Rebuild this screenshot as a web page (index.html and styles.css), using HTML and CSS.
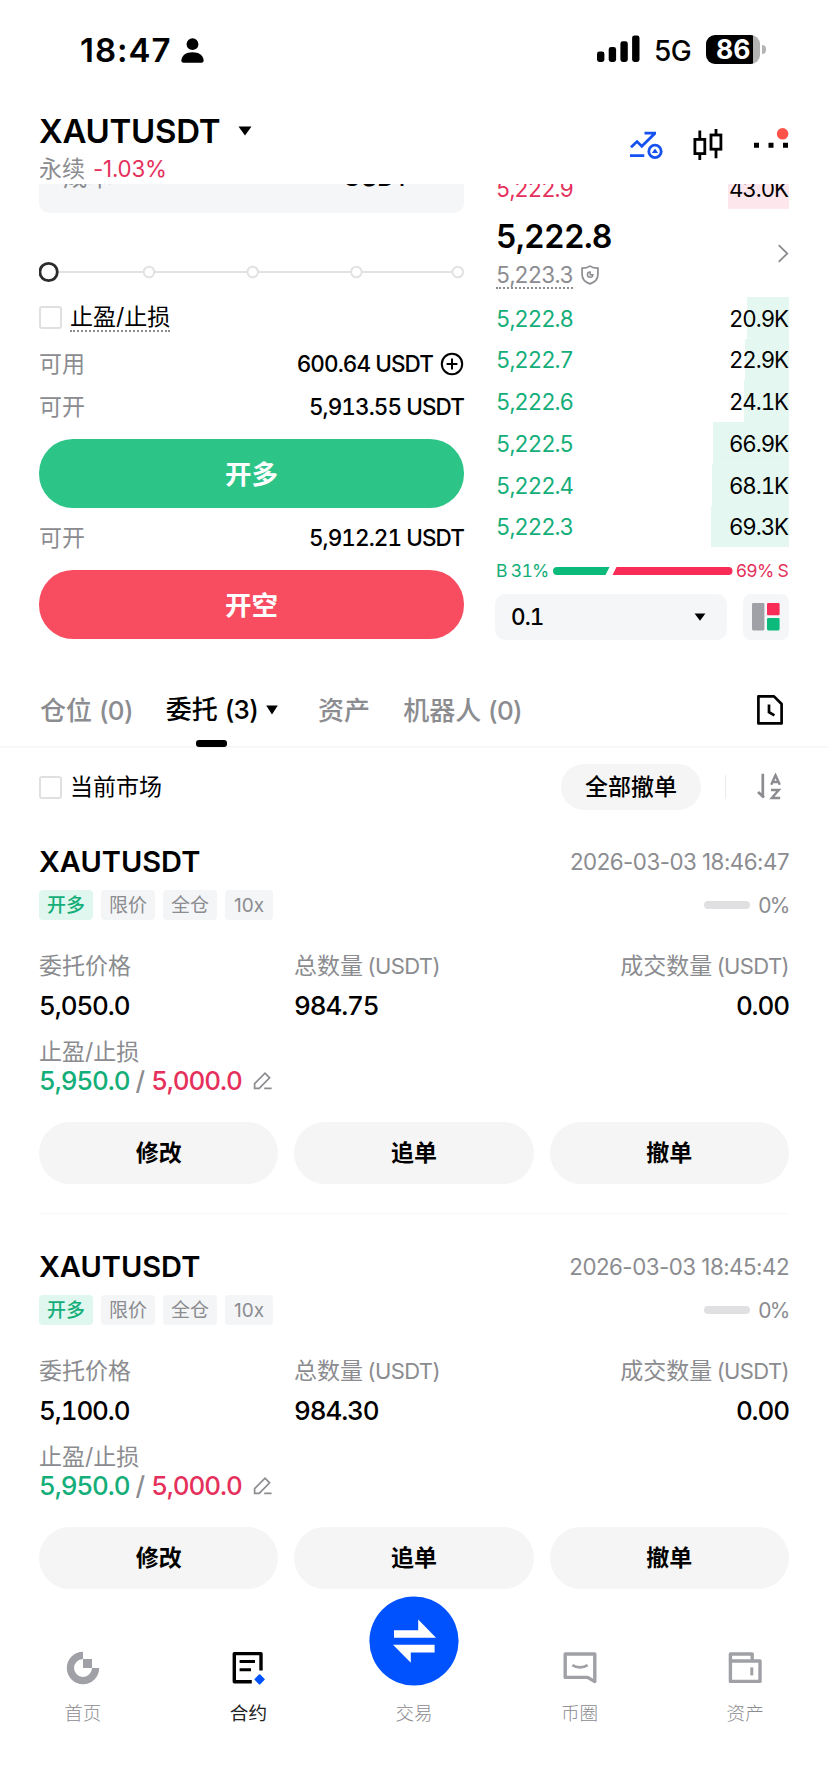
FILE: index.html
```html
<!DOCTYPE html>
<html lang="zh-CN">
<head>
<meta charset="utf-8">
<title>XAUTUSDT 永续</title>
<link rel="stylesheet" href="styles.css">
</head>
<body>
<div class="status">
  <div class="clock"><span>18:47</span>
    <svg width="23" height="25" viewBox="0 0 23 25"><circle cx="11.5" cy="6.2" r="5.9"/><path d="M0.4 22.6C0.4 17.6 5 14.2 11.5 14.2S22.6 17.6 22.6 22.6C22.6 24 21.8 24.8 20.4 24.8H2.6C1.2 24.8 .4 24 .4 22.6Z"/></svg>
  </div>
  <div class="signals">
    <svg width="43" height="28" viewBox="0 0 43 28"><rect x="0" y="16.5" width="7.4" height="10.5" rx="2.4"/><rect x="11.7" y="12" width="7.4" height="15" rx="2.4"/><rect x="23.4" y="6.3" width="7.4" height="20.7" rx="2.4"/><rect x="35.1" y="0.5" width="7.4" height="26.5" rx="2.4"/></svg>
    <span class="net">5G</span>
    <div class="battery"><span>86</span></div><i class="nub"></i>
  </div>
</div>

<header class="header">
  <div>
    <h1 class="pair">XAUTUSDT <svg width="14" height="10" viewBox="0 0 14 10"><path d="M.5.5h13L7 9.6z"/></svg></h1>
    <div class="sub">永续 <span class="down">-1.03%</span></div>
  </div>
  <div class="tools">
    <svg width="34" height="28" viewBox="0 0 34 28" fill="none" stroke="#1652f0" stroke-width="2.8"><path d="M2 16.2 8 10.6 12.8 15.2 26 2.2M15.5 2.2H27M1 24.6H15.3"/><circle cx="26" cy="20.4" r="6.2"/><path d="M26 17.4l3.1 4.5h-6.2z" fill="#1652f0" stroke="none"/></svg>
    <svg width="30" height="34" viewBox="0 0 30 34" fill="none" stroke="#000" stroke-width="2.8"><rect x="1.9" y="11.4" width="9.9" height="14.2"/><path d="M6.8 2.5v9M6.8 25.6v6.5"/><rect x="18" y="7" width="9.9" height="14.2"/><path d="M23 1v6M23 21.2v9"/></svg>
    <svg class="more" width="36" height="34" viewBox="0 0 36 34"><path d="M1 14.8h5v5H1zM15.5 14.8h5v5h-5zM30 14.8h5v5h-5z"/><circle cx="29.6" cy="5.8" r="5.8" fill="#ff5349"/></svg>
  </div>
</header>

<section class="trade">
  <div class="form">
    <div class="amount"><span>成本</span><b>USDT</b></div>
    <svg class="slider" width="425" height="22" viewBox="0 0 425 22" fill="#fff" stroke="#e2e2e2" stroke-width="2"><path d="M10 11H419"/><circle cx="110" cy="11" r="5.3"/><circle cx="213.7" cy="11" r="5.3"/><circle cx="317.4" cy="11" r="5.3"/><circle cx="418.8" cy="11" r="5.3"/><circle cx="9.6" cy="11" r="8.7" stroke="#2b2b2d" stroke-width="2.8"/></svg>
    <label class="check tpsl"><i class="box"></i><span class="dotted">止盈/止损</span></label>
    <div class="line avail"><span>可用</span><b>600.64 USDT<svg width="24" height="24" viewBox="0 0 24 24" fill="none" stroke="#000" stroke-width="2"><circle cx="12" cy="12" r="10.2"/><path d="M6.6 12h10.8M12 6.6v10.8"/></svg></b></div>
    <div class="line open"><span>可开</span><b>5,913.55 USDT</b></div>
    <button class="big long">开多</button>
    <div class="line short-line"><span>可开</span><b>5,912.21 USDT</b></div>
    <button class="big short">开空</button>
  </div>

  <div class="book">
    <div class="row ask" style="--depth:61px"><span>5,222.9</span><b>43.0K</b></div>
    <div class="mid">
      <div>
        <div class="last">5,222.8</div>
        <div class="mark"><span>5,223.3</span><svg width="18" height="20" viewBox="0 0 18 20" fill="none" stroke="#8b8c90" stroke-width="1.7"><path d="M9 1.1C11.3 2.6 14 3.2 16.9 3.2V9.5C16.9 14 13.8 17.2 9 18.9C4.2 17.2 1.1 14 1.1 9.5V3.2C4 3.2 6.7 2.6 9 1.1Z"/><path d="M9.2 6.9A2.7 2.7 0 1 0 11.8 9.7H9.2Z" stroke-width="1.5"/></svg></div>
      </div>
      <svg width="12" height="19" viewBox="0 0 12 19" fill="none" stroke="#8b8c90" stroke-width="1.8"><path d="M1.7 1.2 10.3 9.5 1.7 17.8"/></svg>
    </div>
    <div class="row" style="--depth:42px"><span>5,222.8</span><b>20.9K</b></div>
    <div class="row" style="--depth:44px"><span>5,222.7</span><b>22.9K</b></div>
    <div class="row" style="--depth:45px"><span>5,222.6</span><b>24.1K</b></div>
    <div class="row" style="--depth:76px"><span>5,222.5</span><b>66.9K</b></div>
    <div class="row" style="--depth:77px"><span>5,222.4</span><b>68.1K</b></div>
    <div class="row" style="--depth:78px"><span>5,222.3</span><b>69.3K</b></div>
    <div class="ratio"><span class="up">B 31%</span>
      <svg width="180" height="8" viewBox="0 0 180 8"><path d="M4 0H56.5L52.5 8H4A4 4 0 0 1 4 0Z" fill="#0cba7b"/><path d="M63.5 0H175.5A4 4 0 0 1 175.5 8H59.5Z" fill="#f92c57"/></svg>
      <span class="down">69% S</span></div>
    <div class="controls">
      <div class="select"><span>0.1</span><svg width="12" height="8" viewBox="0 0 12 8"><path d="M.6.4h10.8L6 7.8z"/></svg></div>
      <div class="layout"><svg width="28" height="28" viewBox="0 0 28 28"><rect width="12.4" height="27.4" rx="1.3" fill="#9fa1a6"/><rect x="15" width="12.6" height="12.3" rx="1.3" fill="#f92c57"/><rect x="15" y="15" width="12.6" height="12.4" rx="1.3" fill="#0cba7b"/></svg></div>
    </div>
  </div>
</section>

<nav class="tabs">
  <span class="tab">仓位 <u>(0)</u></span>
  <span class="tab active"><span>委托 <u>(3)</u></span><svg width="12" height="10" viewBox="0 0 12 10"><path d="M.2.6h11.6L6 9.4z"/></svg></span>
  <span class="tab">资产</span>
  <span class="tab">机器人 <u>(0)</u></span>
  <svg class="history" width="28" height="32" viewBox="0 0 28 32" fill="none" stroke="#000" stroke-width="2.7" stroke-linejoin="round"><path d="M2.4 2.4H18L25.6 10V29.4H2.4Z"/><path d="M13 10.5v7.7l5.4 3.2" stroke-linejoin="miter"/></svg>
</nav>

<div class="filter">
  <label class="check"><i class="box"></i><span>当前市场</span></label>
  <button class="pill cancel-all">全部撤单</button>
  <i class="sep"></i>
  <svg width="26" height="28" viewBox="0 0 26 28" fill="none" stroke="#8b8c90" stroke-width="2.7"><path d="M5.8 .8V24.6M7 24.4 1 18.9"/><path d="M14.2 11.8 18.5 2.2 22.8 11.8M15.6 9H21.4" stroke-width="2.4"/><path d="M14 17H21.8L14.8 25H23.2" stroke-width="2.4"/></svg>
</div>

<main class="orders">
  <article class="card">
    <div class="head"><h2>XAUTUSDT</h2><time>2026-03-03 18:46:47</time></div>
    <div class="tags"><em class="tag buy">开多</em><em class="tag">限价</em><em class="tag">全仓</em><em class="tag lev">10x</em><i class="bar"></i><span class="pct">0%</span></div>
    <div class="stats"><span>委托价格</span><span>总数量 <u>(USDT)</u></span><span>成交数量 <u>(USDT)</u></span><b>5,050.0</b><b>984.75</b><b>0.00</b></div>
    <div class="stop"><span>止盈/止损</span>
      <p><b class="up">5,950.0</b><i>/</i><b class="down">5,000.0</b><svg width="20" height="20" viewBox="0 0 20 20" fill="none" stroke="#8b8c90" stroke-width="1.7"><path d="M1.6 17.4V12.6L12 2.2 16.6 6.8 6.2 17.4ZM11.2 17.4H18.6"/></svg></p></div>
    <div class="actions"><button class="pill">修改</button><button class="pill">追单</button><button class="pill">撤单</button></div>
  </article>
  <article class="card">
    <div class="head"><h2>XAUTUSDT</h2><time>2026-03-03 18:45:42</time></div>
    <div class="tags"><em class="tag buy">开多</em><em class="tag">限价</em><em class="tag">全仓</em><em class="tag lev">10x</em><i class="bar"></i><span class="pct">0%</span></div>
    <div class="stats"><span>委托价格</span><span>总数量 <u>(USDT)</u></span><span>成交数量 <u>(USDT)</u></span><b>5,100.0</b><b>984.30</b><b>0.00</b></div>
    <div class="stop"><span>止盈/止损</span>
      <p><b class="up">5,950.0</b><i>/</i><b class="down">5,000.0</b><svg width="20" height="20" viewBox="0 0 20 20" fill="none" stroke="#8b8c90" stroke-width="1.7"><path d="M1.6 17.4V12.6L12 2.2 16.6 6.8 6.2 17.4ZM11.2 17.4H18.6"/></svg></p></div>
    <div class="actions"><button class="pill">修改</button><button class="pill">追单</button><button class="pill">撤单</button></div>
  </article>
</main>

<footer class="nav">
  <div class="item"><svg width="34" height="34" viewBox="0 0 34 34" fill="#9fa1a6"><path d="M17 .8V8A9 9 0 1 0 26 17H33.2A16.2 16.2 0 1 1 17 .8Z"/><path d="M17 8h9v9h-9z"/></svg><span>首页</span></div>
  <div class="item current"><svg width="34" height="34" viewBox="0 0 34 34" fill="none" stroke="#000" stroke-width="3"><path d="M30 19.5V2.6H3.3V30.8H20.8" stroke-linejoin="round" stroke-width="3.4"/><path d="M8.6 10.4H24M8.6 18.8H20"/><rect x="-3.9" y="-3.9" width="7.8" height="7.8" rx="1" transform="translate(28.6 28.4) rotate(45)" fill="#0052ff" stroke="none"/></svg><span>合约</span></div>
  <div class="item"><svg class="swap" width="90" height="90" viewBox="0 0 90 90"><circle cx="45" cy="45" r="44.6" fill="#0052ff"/><path d="M25 34.3H49.2V23.6L67 41.8H25ZM65.6 48.8V56.6H41.8V66.8L24 48.8Z" fill="#fff"/></svg><span>交易</span></div>
  <div class="item"><svg width="34" height="34" viewBox="0 0 34 34" fill="none" stroke="#9fa1a6" stroke-width="3.4" stroke-linejoin="round"><path d="M2.2 3H31.8V30.6L24.6 26.4H2.2Z"/><path d="M9.4 14.2C13.6 17 20.4 17 24.6 14.2" stroke-width="2.8"/></svg><span>币圈</span></div>
  <div class="item"><svg width="34" height="34" viewBox="0 0 34 34" fill="none" stroke="#9fa1a6" stroke-width="3.4" stroke-linejoin="round"><path d="M2.4 10V3H24.2V10"/><path d="M2.4 10H32V30.4H2.4Z"/><path d="M23.8 16.4V24.4" stroke-width="3"/></svg><span>资产</span></div>
</footer>
</body>
</html>
```
FILE: styles.css
```css
* { box-sizing: border-box; margin: 0; padding: 0; }
body {
  width: 828px; height: 1792px; overflow: hidden;
  display: flex; flex-direction: column;
  background: #fff; color: #000;
  font-family: Inter, "Noto Sans CJK SC", sans-serif;
  font-size: 23px; line-height: 28px; white-space: nowrap;
}
svg { display: block; flex: none; }
b, i, em { font-weight: 500; font-style: normal; }
u { text-decoration: none; }
button { border: 0; font: inherit; color: inherit; display: block; }
.up { color: #14ae79; }
.down { color: #e5305c; }

.status { height: 98px; padding: 0 62px 0 80px; display: flex; justify-content: space-between; align-items: center; }
.clock { display: flex; align-items: center; gap: 9px; font-size: 33px; font-weight: 600; line-height: 40px; padding-top: 2px; letter-spacing: 1px; }
.signals { display: flex; align-items: center; }
.net { font-size: 28px; font-weight: 500; letter-spacing: -0.6px; margin: 4px 0 0 14px; }
.battery {
  width: 54px; height: 29px; margin-left: 15px; border-radius: 9px;
  background: linear-gradient(to right, #000 47px, #b3b3b3 47px);
  color: #fff; font-size: 26.5px; font-weight: 700; line-height: 29px; padding-left: 10px;
}
.nub { width: 4px; height: 9px; margin-left: 2px; border-radius: 0 4px 4px 0; background: #b3b3b3; }

.header { height: 86px; padding: 13px 39px 0; display: flex; justify-content: space-between; }
.pair { display: flex; align-items: center; gap: 18px; font-size: 33px; font-weight: 600; line-height: 40px; letter-spacing: -0.3px; }
.sub { display: flex; gap: 8px; margin-top: 4px; line-height: 28px; color: #8b8c90; }
.sub .down { font-size: 22.3px; letter-spacing: -0.2px; }
.tools { display: flex; align-items: flex-start; padding-top: 17px; gap: 30px; }
.tools svg:first-child { margin-top: 3px; }

.trade { height: 484px; padding: 0 39px; display: grid; grid-template-columns: 425px 294px; gap: 31px; overflow: hidden; }
.amount {
  height: 72px; margin-top: -43px; padding: 0 54px 0 24px; border-radius: 10px; background: #f4f6f8;
  display: flex; align-items: center; justify-content: space-between; color: #8b8c90; font-size: 24.5px;
}
.amount b { color: #000; }
.slider { margin-top: 48px; }
.check { display: flex; align-items: center; gap: 8px; }
.box { width: 23px; height: 23px; border: 2px solid #dfe0e2; border-radius: 3px; }
.tpsl { margin-top: 20px; height: 28px; }
.dotted { line-height: 26px; padding-top: 1px; border-bottom: 2px dotted #8b8c90; }
.line { display: flex; justify-content: space-between; height: 28px; color: #8b8c90; }
.line b { display: flex; align-items: center; gap: 7px; color: #000; font-size: 22.5px; letter-spacing: -0.92px; font-variant-numeric: tabular-nums; }
.avail { margin-top: 19px; }
.open { margin-top: 15px; }
.big { width: 425px; height: 69px; border-radius: 34px; color: #fff; font-size: 26.5px; font-weight: 700; }
.long { margin-top: 18px; background: #2dc488; }
.short { margin-top: 18px; background: #f84d60; }
.short-line { margin-top: 16px; }

.book { font-variant-numeric: tabular-nums; }
.row {
  height: 41.75px; display: flex; justify-content: space-between; align-items: center; padding: 2px 0 0 1px;
  color: #14ae79; font-size: 22.3px; letter-spacing: -1.05px;
  background: linear-gradient(#e4f8f1, #e4f8f1) no-repeat right / var(--depth) 100%;
}
.row b { color: #000; font-weight: 400; padding-right: 1px; }
.ask { margin-top: -17px; color: #e5305c; background-image: linear-gradient(#fde7ed, #fde7ed); }
.mid { height: 88px; padding: 9px 0 0 1px; display: flex; justify-content: space-between; }
.mid > svg { margin-top: 26px; }
.last { font-size: 32px; font-weight: 600; line-height: 37px; letter-spacing: -0.7px; }
.mark { display: flex; align-items: center; gap: 8px; margin-top: 7px; color: #8b8c90; font-size: 22.3px; letter-spacing: -1.05px; }
.mark span { line-height: 24px; padding-top: 1px; border-bottom: 2px dotted #8b8c90; }
.ratio { height: 47px; padding: 0 1px; display: flex; align-items: center; font-size: 17.6px; letter-spacing: -0.75px; }
.ratio svg { margin: 0 3px 0 auto; }
.controls { display: flex; gap: 16px; }
.select { width: 232px; height: 46px; border-radius: 10px; background: #f4f6f8; padding: 0 21px 0 16px; display: flex; align-items: center; justify-content: space-between; font-size: 22.5px; font-weight: 500; letter-spacing: -0.9px; }
.layout { width: 46px; height: 46px; border-radius: 8px; background: #f4f6f8; display: grid; place-content: center; }

.tabs { height: 80px; padding: 5px 44px 0 40px; display: flex; border-bottom: 2px solid #f8f8f9; font-size: 26px; font-weight: 500; line-height: 76px; color: #8b8c90; }
.tabs u { letter-spacing: -0.7px; }
.tab { margin-right: 33px; }
.tab.active { position: relative; display: flex; align-items: center; gap: 8px; margin-right: 40px; color: #000; }
.active::after { content: ""; position: absolute; left: 30px; bottom: -1px; width: 31px; height: 7px; border-radius: 3px; background: #000; }
.history { margin: 21px 0 0 auto; }

.filter { height: 78px; padding: 0 45px 0 39px; display: flex; align-items: center; }
.pill { background: #f5f5f5; border-radius: 31px; font-weight: 500; }
.cancel-all { width: 140px; height: 46px; margin-left: auto; }
.sep { width: 1px; height: 24px; margin: 0 31px 0 24px; background: #ececee; }

.orders { flex: 1; overflow: hidden; padding: 0 39px; }
.card { height: 388px; padding-top: 18px; margin-bottom: 17px; border-bottom: 1px solid #f8f8f9; }
.card:last-child { border: 0; }
.head { display: flex; justify-content: space-between; line-height: 36px; }
h2 { font-size: 29px; font-weight: 600; }
time { color: #8b8c90; font-size: 22.3px; letter-spacing: -0.5px; }
.tags { display: flex; align-items: center; gap: 8px; height: 30px; margin-top: 10px; }
.tag { width: 54px; height: 30px; line-height: 32px; border-radius: 4px; background: #f4f5f6; color: #8b8c90; font-size: 19px; font-weight: 400; text-align: center; }
.buy { background: #dff7ee; color: #14ae79; font-weight: 500; }
.lev { width: 48px; }
.bar { width: 46px; height: 8px; border-radius: 4px; background: #e0e0e2; margin-left: auto; }
.pct { color: #8b8c90; font-size: 21px; letter-spacing: -1.5px; padding: 2px 0 0; }
.stats { margin-top: 32px; display: grid; grid-template-columns: 255px 1fr auto; row-gap: 10px; color: #8b8c90; }
.stats u { font-size: 22px; letter-spacing: -0.6px; margin-left: -2px; }
.stats b, .stop b { color: #000; font-size: 26px; line-height: 32px; letter-spacing: -1.1px; font-variant-numeric: tabular-nums; }
.stats > :nth-child(3n) { text-align: right; }
.stop { margin-top: 17px; line-height: 26px; color: #8b8c90; }
.stop p { display: flex; align-items: center; height: 32px; }
.stop i { font-size: 26px; margin: 0 6px; }
.stop .up { color: #14ae79; }
.stop .down { color: #e5305c; }
.stop svg { margin-left: 11px; }
.actions { display: flex; gap: 16px; margin-top: 25px; }
.actions .pill { flex: 1; height: 62px; font-weight: 600; }

.nav { height: 174px; display: flex; flex: none; background: #fff; }
.item { flex: 1; display: flex; flex-direction: column; align-items: center; padding-top: 33px; gap: 15px; font-size: 18.6px; font-weight: 300; line-height: 26px; color: #8b8c90; }
.current { color: #222; font-weight: 400; }
.swap { margin: -55px 0 -1px; }
```
